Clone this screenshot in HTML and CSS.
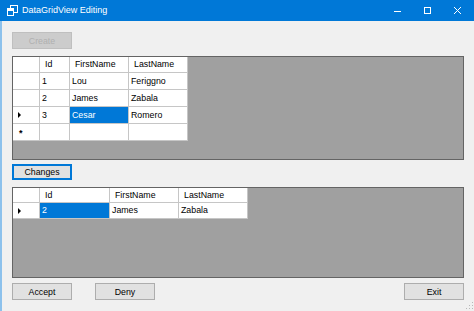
FILE: index.html
```html
<!DOCTYPE html>
<html>
<head>
<meta charset="utf-8">
<link rel="stylesheet" href="styles.css">
</head>
<body>
<div class="window">
  <div class="titlebar">
    <svg class="app-icon" width="11" height="11" viewBox="0 0 11 11">
      <rect x="3.5" y="0.5" width="7" height="7" fill="none" stroke="#fff" stroke-width="1"/>
      <rect x="0.5" y="3.5" width="6" height="7" fill="#0078d7" stroke="#fff" stroke-width="1"/>
      <rect x="1" y="4" width="5" height="2" fill="#fff"/>
    </svg>
    <span class="title">DataGridView Editing</span>
    <div class="controls">
      <svg class="ctl" width="7" height="7" viewBox="0 0 7 7"><line x1="0" y1="4.5" x2="7" y2="4.5" stroke="#fff" stroke-width="1"/></svg>
      <svg class="ctl" width="7" height="7" viewBox="0 0 7 7"><rect x="0.5" y="0.5" width="6" height="6" fill="none" stroke="#fff" stroke-width="1"/></svg>
      <svg class="ctl" width="7" height="7" viewBox="0 0 7 7"><path d="M0 0 L7 7 M7 0 L0 7" stroke="#fff" stroke-width="1"/></svg>
    </div>
  </div>
  <div class="client">
    <button class="btn disabled create">Create</button>
    <div class="dgv dgv1">
      <div class="grid g1">
        <div class="c hdr rh"></div><div class="c hdr">Id</div><div class="c hdr">FirstName</div><div class="c hdr">LastName</div>
        <div class="c rh"></div><div class="c">1</div><div class="c">Lou</div><div class="c">Feriggno</div>
        <div class="c rh"></div><div class="c">2</div><div class="c">James</div><div class="c">Zabala</div>
        <div class="c rh"><span class="arrow"></span></div><div class="c">3</div><div class="c sel">Cesar</div><div class="c">Romero</div>
        <div class="c rh"><span class="star">*</span></div><div class="c"></div><div class="c"></div><div class="c"></div>
      </div>
    </div>
    <button class="btn focused changes">Changes</button>
    <div class="dgv dgv2">
      <div class="grid g2">
        <div class="c hdr rh"></div><div class="c hdr">Id</div><div class="c hdr">FirstName</div><div class="c hdr">LastName</div>
        <div class="c rh"><span class="arrow"></span></div><div class="c sel">2</div><div class="c">James</div><div class="c">Zabala</div>
      </div>
    </div>
    <div class="bottom">
      <button class="btn">Accept</button>
      <button class="btn deny">Deny</button>
      <button class="btn exit">Exit</button>
    </div>
  </div>
  <div class="grip"></div>
</div>
</body>
</html>
```
FILE: styles.css
```css
* { box-sizing: border-box; }
html, body { margin: 0; padding: 0; }
body {
  width: 474px;
  height: 311px;
  overflow: hidden;
  background: #f0f0f0;
  font-family: "Liberation Sans", Arial, sans-serif;
  font-size: 8.8px;
  color: #000;
}
.window {
  position: relative;
  width: 474px;
  height: 311px;
  display: flex;
  flex-direction: column;
  background: #f0f0f0;
  border-left: 2px solid #8cc1ec;
}
.titlebar {
  height: 21px;
  flex: none;
  background: #0078d7;
  color: #fff;
  display: flex;
  align-items: center;
  margin-left: -2px;
  padding-left: 7px;
}
.app-icon { flex: none; margin-right: 4px; }
.title { font-size: 9px; line-height: 21px; }
.controls {
  margin-left: auto;
  display: flex;
  align-items: center;
  gap: 23px;
  padding-right: 13px;
}
.ctl { display: block; }
.client {
  flex: 1;
  display: flex;
  flex-direction: column;
  align-items: flex-start;
  padding-left: 10px;
}
.btn {
  font-family: inherit;
  font-size: 8.8px;
  width: 60px;
  height: 17px;
  padding: 0;
  line-height: 14px;
  background: #e1e1e1;
  border: 1px solid #adadad;
  color: #000;
  border-radius: 0;
}
.btn.disabled {
  background: #cccccc;
  border-color: #bfbfbf;
  color: #b0b0b0;
}
.create { margin-top: 11px; }
.changes { margin-top: 4px; height: 16px; }
.btn.focused {
  border: 2px solid #0078d7;
  line-height: 11px;
}
.dgv {
  width: 452px;
  background: #a0a0a0;
  border: 1px solid #646464;
}
.dgv1 { margin-top: 7px; height: 104px; }
.dgv2 { margin-top: 7px; height: 91px; }
.grid { display: grid; width: max-content; background: #fff; }
.g1 {
  grid-template-columns: 27px 30px 59px 59px;
  grid-template-rows: 16px repeat(4, 17px);
}
.g2 {
  grid-template-columns: 27px 70px 69px 69px;
  grid-template-rows: 15px 16px;
}
.c {
  border-right: 1px solid #c6c6c6;
  border-bottom: 1px solid #c6c6c6;
  padding-left: 2px;
  line-height: 15px;
  white-space: nowrap;
  overflow: hidden;
  display: flex;
  align-items: center;
}
.c.hdr { padding-left: 5px; }
.c.rh { padding-left: 5px; }
.sel { background: #0078d7; color: #fff; }
.arrow {
  width: 0; height: 0;
  border-top: 3px solid transparent;
  border-bottom: 3px solid transparent;
  border-left: 3px solid #000;
}
.star { font-size: 9px; font-weight: bold; line-height: 9px; padding-top: 3px; padding-left: 1px; }
.bottom {
  margin-top: 5px;
  width: 452px;
  display: flex;
}
.deny { margin-left: 23px; }
.exit { margin-left: auto; }
.grip {
  position: absolute;
  right: 1px;
  bottom: 2px;
  width: 8px;
  height: 8px;
  background:
    radial-gradient(circle, #b8b8b8 0.8px, transparent 1px) 0 0 / 3px 3px;
  clip-path: polygon(100% 0, 100% 100%, 0 100%);
}
```
